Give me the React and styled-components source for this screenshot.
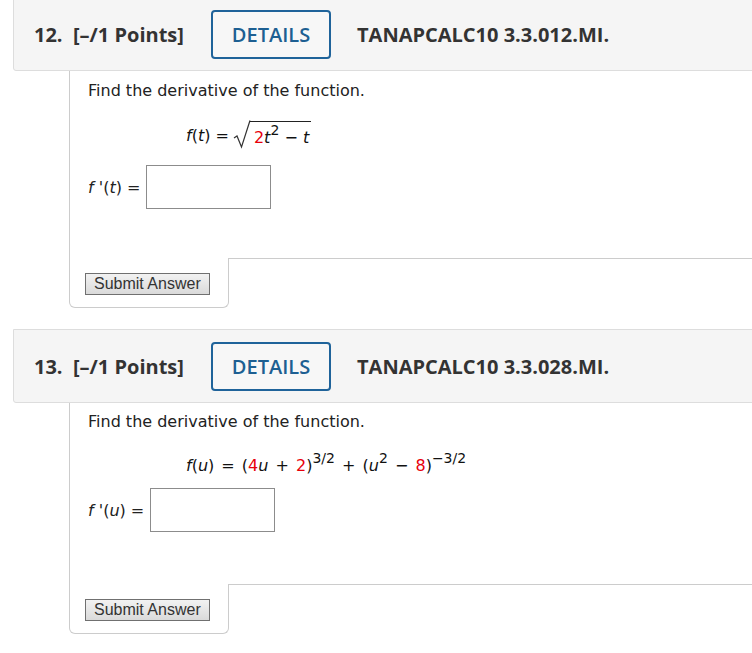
import styled, { createGlobalStyle } from "styled-components";

const GlobalStyle = createGlobalStyle`
  body {
    margin: 0;
    background: #fff;
    overflow: hidden;
  }
`;

const Page = styled.div`
  padding-left: 13px;
  margin-top: -3px;
`;

const Question = styled.section`
  margin-bottom: ${(p) => p.gap || 0}px;
`;

const Header = styled.div`
  display: flex;
  align-items: center;
  height: 72px;
  margin-right: -20px;
  padding-left: 20px;
  background-color: #f5f5f5;
  border: 1px solid #dddddd;
  border-radius: 0 0 0 3px;
  font-family: "Open Sans", sans-serif;
  font-weight: 700;
  font-size: 20px;
  color: #333333;
`;

const Number = styled.span`
  width: 177px;
  white-space: pre;
`;

const DetailsButton = styled.button`
  box-sizing: border-box;
  width: 120px;
  height: 49px;
  background: #f7f7f7;
  border: 2px solid #1f639a;
  border-radius: 4px;
  color: #1d5f92;
  font-family: "Open Sans", sans-serif;
  font-weight: 600;
  font-size: 20px;
  cursor: pointer;
`;

const Title = styled.span`
  margin-left: 26px;
`;

const Body = styled.div`
  margin-left: 56px;
  border-left: 1px solid #cccccc;
  padding: ${(p) => p.top}px 0 ${(p) => p.bottom}px 18px;
  font-family: "DejaVu Sans", Verdana, sans-serif;
  font-size: 16px;
  color: #222222;
`;

const Prompt = styled.p`
  margin: 0;
  line-height: 22px;
`;

const Equation = styled.div`
  margin: ${(p) => p.top}px 0 0 98px;
  height: 28px;
  line-height: 28px;
  white-space: pre;
  word-spacing: ${(p) => (p.wide ? 2 : 0)}px;
  color: #111;
`;

const V = styled.i`
  font-style: italic;
`;

const Red = styled.span`
  color: #e8000b;
`;

const Sup = styled.sup`
  font-size: 14px;
  vertical-align: 8px;
  line-height: 0;
  word-spacing: 0;
`;

const Radical = styled.span`
  display: inline-flex;
  align-items: flex-end;
  vertical-align: -8px;
  margin-left: 4px;
  line-height: 22px;
`;

const Radicand = styled.span`
  border-top: 1px solid #222;
  padding: 5px 2px 0 4px;
  margin-left: -1px;
`;

const AnswerRow = styled.div`
  display: flex;
  align-items: center;
  margin-top: ${(p) => p.top}px;
  white-space: pre;
`;

const AnswerInput = styled.input`
  box-sizing: border-box;
  width: 125px;
  height: 44px;
  margin-left: 6px;
  border: 1px solid #8c8c8c;
  border-radius: 0;
`;

const Footer = styled.div`
  display: flex;
  margin-left: 56px;
`;

const SubmitCell = styled.div`
  box-sizing: border-box;
  width: 160px;
  height: 50px;
  padding: 15px 0 0 15px;
  border: 1px solid #cccccc;
  border-top: none;
  border-radius: 0 0 6px 6px;
`;

const Filler = styled.div`
  flex: 1;
  border-top: 1px solid #cccccc;
`;

const SubmitButton = styled.button`
  box-sizing: border-box;
  height: 22px;
  padding: 0 8px;
  background: linear-gradient(#f2f2f2, #dadada);
  border: 1px solid #707070;
  border-radius: 0;
  font-family: "Liberation Sans", Arial, sans-serif;
  font-size: 16px;
  color: #333333;
  line-height: 18px;
`;

const RadicalSign = () => (
  <svg width="18" height="29" viewBox="0 0 18 29">
    <path d="M1 18 L4 16 L8.5 27 L17 0.5" fill="none" stroke="#333" strokeWidth="1.2" />
  </svg>
);

const QuestionHeader = ({ num, code }) => (
  <Header>
    <Number>{`${num}.  [–/1 Points]`}</Number>
    <DetailsButton>DETAILS</DetailsButton>
    <Title>{code}</Title>
  </Header>
);

const App = () => {
  return (
    <Page>
      <GlobalStyle />
      <Question gap={21}>
        <QuestionHeader num="12" code="TANAPCALC10 3.3.012.MI." />
        <Body top={9} bottom={49}>
          <Prompt>Find the derivative of the function.</Prompt>
          <Equation top={18}>
            <V>f</V>(<V>t</V>) =
            <Radical>
              <RadicalSign />
              <Radicand>
                <Red>2</Red>
                <V>t</V>
                <Sup>2</Sup> − <V>t</V>
              </Radicand>
            </Radical>
          </Equation>
          <AnswerRow top={17}>
            <span>
              <V>f</V> '(<V>t</V>) =
            </span>
            <AnswerInput type="text" />
          </AnswerRow>
        </Body>
        <Footer>
          <SubmitCell>
            <SubmitButton>Submit Answer</SubmitButton>
          </SubmitCell>
          <Filler />
        </Footer>
      </Question>
      <Question>
        <QuestionHeader num="13" code="TANAPCALC10 3.3.028.MI." />
        <Body top={8} bottom={52}>
          <Prompt>Find the derivative of the function.</Prompt>
          <Equation top={19} wide>
            <V>f</V>(<V>u</V>) = (<Red>4</Red>
            <V>u</V> + <Red>2</Red>)<Sup>3/2</Sup> + (<V>u</V>
            <Sup>2</Sup> − <Red>8</Red>)<Sup>−3/2</Sup>
          </Equation>
          <AnswerRow top={8}>
            <span>
              <V>f</V> '(<V>u</V>) =
            </span>
            <AnswerInput type="text" />
          </AnswerRow>
        </Body>
        <Footer>
          <SubmitCell>
            <SubmitButton>Submit Answer</SubmitButton>
          </SubmitCell>
          <Filler />
        </Footer>
      </Question>
    </Page>
  );
};

export default App;
